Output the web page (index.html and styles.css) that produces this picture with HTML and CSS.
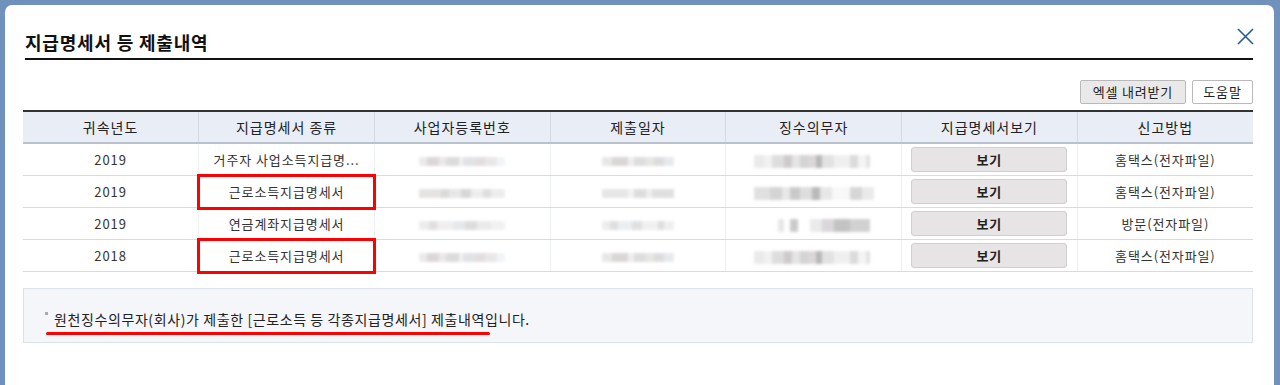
FILE: index.html
```html
<!DOCTYPE html>
<html>
<head>
    <title>지급명세서 등 제출내역</title>
    <meta charset="UTF-8">
    <link rel="stylesheet" href="styles.css">
</head>
<body>
    <div class="window">
        <div class="title-bar">
            <h1>지급명세서 등 제출내역</h1>
            <a class="close" href="#" aria-label="닫기">
                <svg width="17" height="17" viewBox="0 0 17 17"><path d="M1 1 L16 16 M16 1 L1 16" stroke="#245d98" stroke-width="1.6" fill="none"/></svg>
            </a>
        </div>

        <div class="toolbar">
            <button class="btn btn-gray">엑셀 내려받기</button>
            <button class="btn btn-white">도움말</button>
        </div>

        <table class="list">
            <thead>
                <tr>
                    <th>귀속년도</th>
                    <th>지급명세서 종류</th>
                    <th>사업자등록번호</th>
                    <th>제출일자</th>
                    <th>징수의무자</th>
                    <th>지급명세서보기</th>
                    <th>신고방법</th>
                </tr>
            </thead>
            <tbody>
                <tr>
                    <td>2019</td>
                    <td>거주자 사업소득지급명...</td>
                    <td><span class="blur blur-bizno"></span></td>
                    <td><span class="blur blur-date"></span></td>
                    <td><span class="blur blur-name"></span></td>
                    <td><button class="view">보기</button></td>
                    <td>홈택스(전자파일)</td>
                </tr>
                <tr>
                    <td>2019</td>
                    <td class="marked">근로소득지급명세서</td>
                    <td><span class="blur blur-bizno2"></span></td>
                    <td><span class="blur blur-date2"></span></td>
                    <td><span class="blur blur-name2"></span></td>
                    <td><button class="view">보기</button></td>
                    <td>홈택스(전자파일)</td>
                </tr>
                <tr>
                    <td>2019</td>
                    <td>연금계좌지급명세서</td>
                    <td><span class="blur blur-bizno3"></span></td>
                    <td><span class="blur blur-date3"></span></td>
                    <td><span class="blur blur-name3"></span></td>
                    <td><button class="view">보기</button></td>
                    <td>방문(전자파일)</td>
                </tr>
                <tr>
                    <td>2018</td>
                    <td class="marked">근로소득지급명세서</td>
                    <td><span class="blur blur-bizno"></span></td>
                    <td><span class="blur blur-date"></span></td>
                    <td><span class="blur blur-name"></span></td>
                    <td><button class="view">보기</button></td>
                    <td>홈택스(전자파일)</td>
                </tr>
            </tbody>
        </table>

        <div class="note">
            <span class="bullet"></span>
            <span class="note-text">원천징수의무자(회사)가 제출한 [근로소득 등 각종지급명세서] 제출내역입니다.</span>
        </div>
    </div>
</body>
</html>
```

FILE: styles.css
```css
body {
    margin: 0;
    padding: 5px 6px 0 5px;
    background: #7191bd;
    font-family: "Noto Sans CJK KR", "Noto Sans", sans-serif;
    color: #333;
    height: 385px;
    box-sizing: border-box;
    overflow: hidden;
}

.window {
    background: #fff;
    border-radius: 7px 7px 0 0;
    height: 380px;
    padding: 0 21px 0 18px;
}

.title-bar {
    position: relative;
    margin-left: 2px;
    padding-top: 22px;
    border-bottom: 2px solid #111;
}

h1 {
    margin: 0;
    font-size: 18px;
    font-weight: bold;
    letter-spacing: 0.8px;
    color: #111;
    line-height: 31px;
}

.close {
    position: absolute;
    right: -1px;
    top: 21px;
}

.toolbar {
    display: flex;
    justify-content: flex-end;
    gap: 6px;
    margin-top: 20px;
    margin-bottom: 6px;
}

.btn {
    font-family: inherit;
    font-size: 13px;
    letter-spacing: 0.8px;
    color: #222;
    height: 24px;
    line-height: 20px;
    padding: 0 6px;
    border: 1px solid #b9b9b9;
    border-radius: 2px;
}

.btn-gray {
    background: #e9e9e9;
    width: 106px;
}

.btn-white {
    background: #fff;
    width: 61px;
}

.list {
    width: 100%;
    table-layout: fixed;
    border-collapse: collapse;
    border-top: 2px solid #333;
    font-size: 13px;
}

.list th {
    background: #e9edf5;
    font-weight: normal;
    font-size: 14px;
    letter-spacing: 1px;
    color: #222;
    height: 30px;
    padding: 0;
    border-left: 1px solid #d3d9e2;
    border-bottom: 2px solid #b9c1cd;
}

.list th:first-child,
.list td:first-child {
    border-left: none;
}

.list td {
    height: 31px;
    padding: 0;
    text-align: center;
    letter-spacing: 0.9px;
    border-left: 1px solid #eceff3;
    border-bottom: 1px solid #d6dce5;
    color: #333;
}

.list td.marked {
    outline: 3px solid #f00;
    outline-offset: -1px;
}

.view {
    font-family: inherit;
    font-size: 13px;
    font-weight: bold;
    letter-spacing: 1px;
    color: #222;
    width: 156px;
    height: 25px;
    background: #e6e4e4;
    border: 1px solid #d0d0d0;
    border-radius: 3px;
    padding: 0;
}

.blur {
    display: inline-block;
    height: 9px;
    vertical-align: middle;
    filter: blur(1.4px);
    opacity: 0.6;
}

.blur-bizno, .blur-bizno2, .blur-bizno3 {
    width: 86px;
    background: linear-gradient(90deg, #ddd 0 8px, #c9bcbc 8px 20px, #dcdcdc 20px 27px, #c4c4c4 27px 40px, #e6e6e6 40px 44px, #ccd0d6 44px 58px, #d3c6c6 58px 66px, #d8d8d8 66px 78px, #e8eef4 78px 86px);
}

.blur-bizno2 {
    background: linear-gradient(90deg, #d6d0cf 0 22px, #c2c2c2 22px 30px, #d7d7d7 30px 42px, #bcbcbc 42px 52px, #e2e2e2 52px 64px, #c8c8c8 64px 72px, #e2e2e2 72px 86px);
}

.blur-bizno3 {
    background: linear-gradient(90deg, #e0e0e0 0 10px, #ccc 10px 18px, #e6e2e2 18px 34px, #d6dade 34px 46px, #c6c6c6 46px 58px, #ddd 58px 72px, #e8e8e8 72px 86px);
}

.blur-date, .blur-date2, .blur-date3 {
    width: 72px;
    background: linear-gradient(90deg, #d8d8d8 0 10px, #c4bcbc 10px 26px, #e4e4e4 26px 32px, #c8c8c8 32px 44px, #dad6d2 44px 52px, #c6c6c6 52px 62px, #d8dce2 62px 72px);
}

.blur-date2 {
    background: linear-gradient(90deg, #d6d6d6 0 26px, #eaeaea 26px 32px, #c6c6c6 32px 44px, #e2e2e2 44px 50px, #cbcbcb 50px 72px);
}

.blur-date3 {
    background: linear-gradient(90deg, #e2e2e2 0 8px, #cacaca 8px 16px, #dde4ea 16px 30px, #ccc 30px 40px, #e6e6e6 40px 56px, #c8c8c8 56px 62px, #e4e4e4 62px 72px);
}

.blur-name, .blur-name2, .blur-name3 {
    width: 120px;
    height: 13px;
    background: linear-gradient(90deg, #ddd 0 10px, #e8e8e8 10px 18px, #c8c8c8 18px 30px, #b0a8a8 30px 38px, #d4d4d4 38px 46px, #b8b8b8 46px 54px, #c6bebe 54px 62px, #8a8a8a 62px 68px, #d0d0d0 68px 80px, #e6e6e6 80px 96px, #c4c4c4 96px 104px, #eee 104px 112px, #d0d0d0 112px 116px, #fff 116px 120px);
}

.blur-name2 {
    background: linear-gradient(90deg, #ccc 0 16px, #b8b8b8 16px 28px, #d8dadc 28px 36px, #a8a8a8 36px 46px, #c8c8c8 46px 58px, #8c8c8c 58px 66px, #d8d8d8 66px 78px, #f4f4f4 78px 96px, #bcbcbc 96px 108px, #ddd 108px 120px);
}

.blur-name3 {
    width: 92px;
    margin-left: 20px;
    background: linear-gradient(90deg, #d8d8d8 0 6px, #fff 6px 12px, #a8a8a8 12px 20px, #fff 20px 32px, #ddd 32px 44px, #c4bcc4 44px 56px, #9c9c9c 56px 72px, #b4b4b4 72px 92px);
}

.note {
    display: flex;
    align-items: center;
    margin-top: 16px;
    height: 55px;
    background: #f4f6fa;
    border: 1px solid #dde2ea;
    box-sizing: border-box;
    padding: 6px 0 0 21px;
    font-size: 14px;
    letter-spacing: 0.6px;
    color: #222;
}

.bullet {
    display: inline-block;
    width: 3px;
    height: 3px;
    background: #aaa;
    margin-right: 6px;
    margin-top: -10px;
}

.note-text {
    position: relative;
}

.note-text::after {
    content: "";
    position: absolute;
    left: -8px;
    width: 444px;
    bottom: -6px;
    height: 3px;
    border-radius: 2px;
    background: #f00;
}
```
